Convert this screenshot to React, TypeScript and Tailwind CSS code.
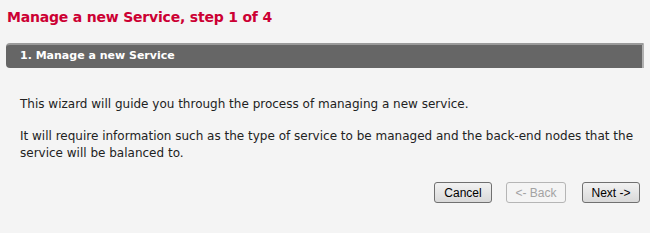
import React from 'react';

const btn =
  'h-[21px] rounded-[3px] border text-[12px] leading-none [font-family:"Liberation_Sans",Arial,sans-serif]';

const App: React.FC = () => {
  return (
    <div className="w-[650px] h-[233px] bg-[#f4f4f4] [font-family:'DejaVu_Sans',Verdana,sans-serif] text-[#222]">
      <h1 className="pl-[7px] pt-[7px] text-[14px] tracking-[-0.2px] font-bold text-[#cc0033] leading-[20px]">
        Manage a new Service, step 1 of 4
      </h1>

      <div className="ml-[6px] mt-[16px] w-[638px] h-[25px] rounded-l-[4px] bg-[#666666] border-t-2 border-t-[#9a9a9a] border-r-2 border-r-[#b0b0b0] flex items-center pl-[14px]">
        <span className="text-[11px] font-bold text-white">1. Manage a new Service</span>
      </div>

      <div className="pl-[20px] w-full pt-[28px] text-[12px] leading-[17px]">
        <p>This wizard will guide you through the process of managing a new service.</p>
        <p className="mt-[15px]">
          It will require information such as the type of service to be managed and the back-end nodes that the
          service will be balanced to.
        </p>
      </div>

      <div className="flex justify-end pr-[10px] mt-[20px]">
        <button className={`${btn} w-[58px] border-[#707070] bg-gradient-to-b from-[#f2f2f2] to-[#d9d9d9] text-black`}>
          Cancel
        </button>
        <button
          disabled
          className={`${btn} ml-[14px] w-[60px] border-[#b5b5b5] bg-[#f4f4f4] text-[#a3a3a3]`}
        >
          &lt;- Back
        </button>
        <button className={`${btn} ml-[16px] w-[58px] border-[#707070] bg-gradient-to-b from-[#f2f2f2] to-[#d9d9d9] text-black`}>
          Next -&gt;
        </button>
      </div>
    </div>
  );
};

export default App;
